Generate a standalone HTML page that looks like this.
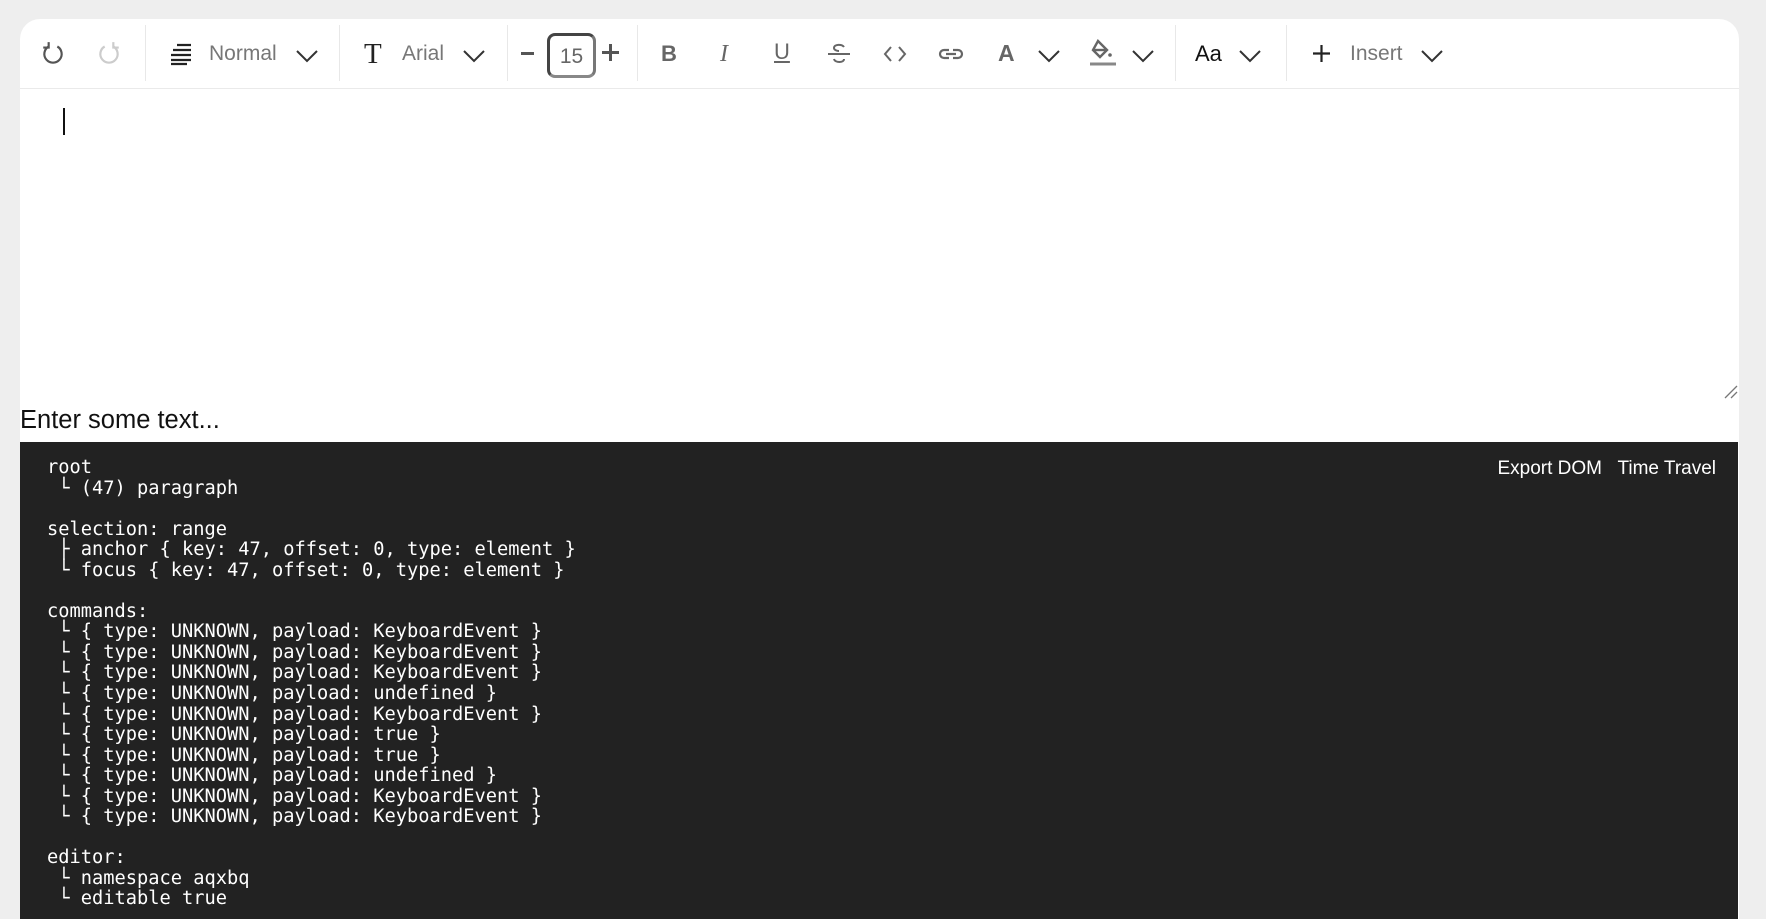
<!DOCTYPE html>
<html><head><meta charset="utf-8"><style>
*{margin:0;padding:0;box-sizing:border-box}
body{width:1766px;height:919px;background:#eeeeee;position:relative;overflow:hidden;font-family:"Liberation Sans",Arial,sans-serif}
.card{position:absolute;left:20px;top:19px;width:1719px;height:900px;background:#fff;border-radius:20px 20px 0 0}
.tb{position:absolute;left:20px;top:88px;width:1719px;height:1px;background:#eaeaea}
.sep{position:absolute;top:25px;width:1px;height:56px;background:#e8e8e8}
.a{position:absolute}
.t{position:absolute;font-size:21px;color:#777;line-height:24px;top:42px}
svg{position:absolute;overflow:visible}
.dark{position:absolute;left:20px;top:442px;width:1718px;height:477px;background:#222}
pre{position:absolute;left:47px;top:458px;font-family:"DejaVu Sans Mono","Liberation Mono",monospace;font-size:18.7px;line-height:20.55px;color:#fff}
.btns{position:absolute;right:50px;top:458px;color:#fff;font-size:19px}
</style></head><body>
<div class="card"></div>
<div class="tb"></div>
<svg style="left:40px;top:40px" width="26" height="26" viewBox="0 0 24 24" fill="none" stroke="#555" stroke-width="2"><path d="M8 6a8 8 0 1 0 8 0"/><path d="M8 2v5H3"/></svg>
<svg style="left:96px;top:40px" width="26" height="26" viewBox="0 0 24 24" fill="none" stroke="#ccc" stroke-width="2"><path d="M8 6a8 8 0 1 0 8 0"/><path d="M16 2v5h5"/></svg>
<div class="sep" style="left:145px"></div>
<svg style="left:169px;top:43px" width="24" height="22" viewBox="0 0 24 22" stroke="#222" stroke-width="2.2"><path d="M8 2h14M4 7h18M2 12h20M2 17h20M2 21h16"/></svg>
<div class="t" style="left:209px">Normal</div>
<svg style="left:296px;top:50px" width="22" height="12" viewBox="0 0 22 12" fill="none" stroke="#333" stroke-width="2"><path d="M1 1l10 10L21 1"/></svg>
<div class="sep" style="left:339px"></div>
<div class="a" style="left:364px;top:38px;font-family:'Liberation Serif',serif;font-size:29px;color:#222">T</div>
<div class="t" style="left:402px">Arial</div>
<svg style="left:463px;top:50px" width="22" height="12" viewBox="0 0 22 12" fill="none" stroke="#333" stroke-width="2"><path d="M1 1l10 10L21 1"/></svg>
<div class="sep" style="left:507px"></div>
<svg style="left:521px;top:52px" width="13" height="3"><rect width="13" height="3" fill="#555"/></svg>
<div class="a" style="left:547px;top:33px;width:49px;height:45px;border:3px solid #444;border-bottom-color:#888;border-right-color:#777;border-radius:8px;font-size:21px;color:#666;text-align:center;line-height:42px">15</div>
<svg style="left:602px;top:44px" width="17" height="17" stroke="#555" stroke-width="3"><path d="M8.5 0v17M0 8.5h17"/></svg>
<div class="sep" style="left:637px"></div>
<div class="a" style="left:661px;top:41px;font-size:22px;font-weight:bold;color:#666">B</div>
<div class="a" style="left:720px;top:41px;font-family:'Liberation Serif',serif;font-style:italic;font-size:24px;color:#666">I</div>
<div class="a" style="left:774px;top:39px;font-size:22px;color:#666;text-decoration:underline">U</div>
<svg style="left:827px;top:43px" width="24" height="22" viewBox="0 0 24 22" fill="none" stroke="#666" stroke-width="2"><path d="M1 11h22"/><path d="M17 4c-2-3-10-3-10 1 0 2 3 3 5 3M7 16c1 4 10 4 10 0"/></svg>
<svg style="left:884px;top:46px" width="22" height="16" viewBox="0 0 22 16" fill="none" stroke="#666" stroke-width="2"><path d="M7 1L1 8l6 7M15 1l6 7-6 7"/></svg>
<svg style="left:938px;top:46px" width="26" height="16" viewBox="0 0 26 16" fill="none" stroke="#666" stroke-width="2.2"><path d="M11 4H6a4 4 0 0 0 0 8h5M15 4h5a4 4 0 0 1 0 8h-5M8 8h10"/></svg>
<div class="a" style="left:998px;top:40px;font-size:23px;font-weight:bold;color:#666">A</div>
<svg style="left:1038px;top:50px" width="22" height="12" viewBox="0 0 22 12" fill="none" stroke="#333" stroke-width="2"><path d="M1 1l10 10L21 1"/></svg>
<svg style="left:1089px;top:39px" width="28" height="28" viewBox="0 0 28 28" fill="none" stroke="#666" stroke-width="2.4"><path d="M9 2l9 9-7 7-7-7z"/><path d="M5 11h13"/><circle cx="21" cy="16" r="1.8" fill="#666" stroke="none"/><path d="M1 25h26" stroke="#888" stroke-width="3"/></svg>
<svg style="left:1132px;top:50px" width="22" height="12" viewBox="0 0 22 12" fill="none" stroke="#333" stroke-width="2"><path d="M1 1l10 10L21 1"/></svg>
<div class="sep" style="left:1175px"></div>
<div class="a" style="left:1195px;top:41px;font-size:22px;color:#111">Aa</div>
<svg style="left:1239px;top:50px" width="22" height="12" viewBox="0 0 22 12" fill="none" stroke="#333" stroke-width="2"><path d="M1 1l10 10L21 1"/></svg>
<div class="sep" style="left:1286px"></div>
<svg style="left:1313px;top:45px" width="17" height="17" stroke="#222" stroke-width="2.2"><path d="M8.5 0v17M0 8.5h17"/></svg>
<div class="t" style="left:1350px">Insert</div>
<svg style="left:1421px;top:50px" width="22" height="12" viewBox="0 0 22 12" fill="none" stroke="#333" stroke-width="2"><path d="M1 1l10 10L21 1"/></svg>
<div class="a" style="left:63px;top:108px;width:2px;height:27px;background:#111"></div>
<svg style="left:1724px;top:385px" width="14" height="14" stroke="#777" stroke-width="1.3"><path d="M1 13L13 1M7 13l6-6"/></svg>
<div class="a" style="left:20px;top:406px;font-size:25.5px;color:#111">Enter some text...</div>
<div class="dark"></div>
<pre>root
 └ (47) paragraph

selection: range
 ├ anchor { key: 47, offset: 0, type: element }
 └ focus { key: 47, offset: 0, type: element }

commands:
 └ { type: UNKNOWN, payload: KeyboardEvent }
 └ { type: UNKNOWN, payload: KeyboardEvent }
 └ { type: UNKNOWN, payload: KeyboardEvent }
 └ { type: UNKNOWN, payload: undefined }
 └ { type: UNKNOWN, payload: KeyboardEvent }
 └ { type: UNKNOWN, payload: true }
 └ { type: UNKNOWN, payload: true }
 └ { type: UNKNOWN, payload: undefined }
 └ { type: UNKNOWN, payload: KeyboardEvent }
 └ { type: UNKNOWN, payload: KeyboardEvent }

editor:
 └ namespace aqxbq
 └ editable true</pre>
<div class="btns">Export DOM&nbsp;&nbsp; Time Travel</div>
</body></html>
